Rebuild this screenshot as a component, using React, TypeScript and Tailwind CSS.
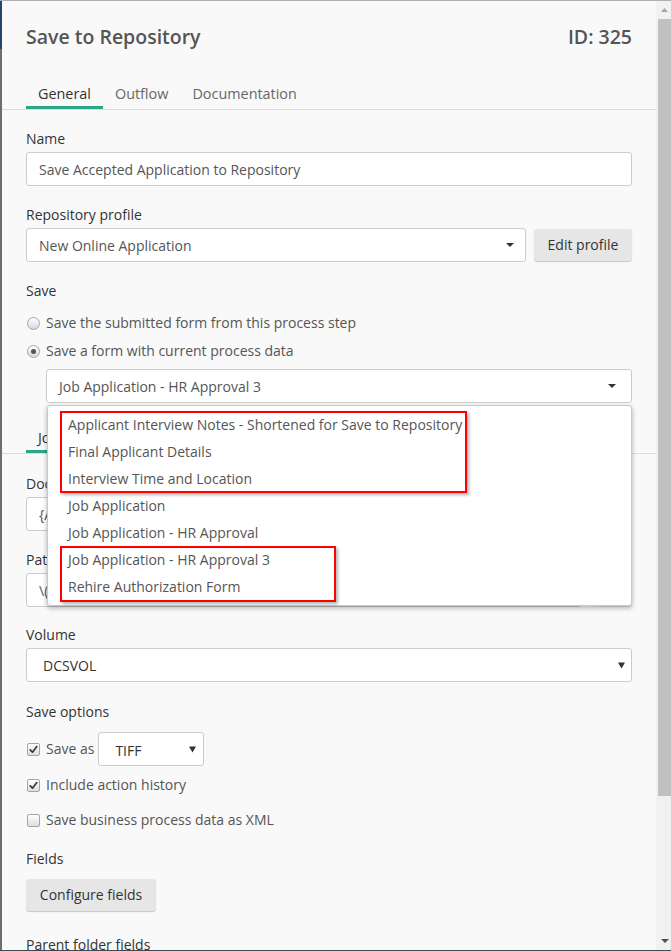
import React from "react";

const font = { fontFamily: '"Open Sans", "Noto Sans", sans-serif' };

function Caret({ className = "" }: { className?: string }) {
  return (
    <svg width="8" height="4" viewBox="0 0 8 4" className={className}>
      <path d="M0 0 L8 0 L4 4 Z" fill="#333" />
    </svg>
  );
}

function NativeCaret() {
  return (
    <svg width="7" height="7" viewBox="0 0 7 7">
      <path d="M0 0.5 L7 0.5 L3.5 6.5 Z" fill="#333" />
    </svg>
  );
}

function Checkbox({ checked }: { checked: boolean }) {
  return (
    <div className="w-[13px] h-[13px] rounded-[2px] border border-[#a5a5a5] bg-gradient-to-b from-[#fefefe] to-[#dedede] flex items-center justify-center shrink-0">
      {checked && (
        <svg width="9" height="9" viewBox="0 0 9 9">
          <path d="M1.2 4.8 L3.5 7.2 L7.8 1.6" stroke="#3a3a3a" strokeWidth="1.7" fill="none" strokeLinecap="round" strokeLinejoin="round" />
        </svg>
      )}
    </div>
  );
}

function Radio({ checked }: { checked: boolean }) {
  return (
    <div className="w-[13px] h-[13px] rounded-full border border-[#a5a5a5] bg-gradient-to-b from-[#fefefe] to-[#d8d8d8] flex items-center justify-center shrink-0">
      {checked && <div className="w-[5px] h-[5px] rounded-full bg-[#555]" />}
    </div>
  );
}

function Label({ children, className = "" }: { children: React.ReactNode; className?: string }) {
  return <div className={`text-[14px] leading-5 text-[#333] ${className}`}>{children}</div>;
}

const items = [
  "Applicant Interview Notes - Shortened for Save to Repository",
  "Final Applicant Details",
  "Interview Time and Location",
  "Job Application",
  "Job Application - HR Approval",
  "Job Application - HR Approval 3",
  "Rehire Authorization Form",
];

export default function App() {
  return (
    <div
      className="w-[671px] h-[951px] overflow-hidden flex bg-[#f9f9f9] border-t border-t-[#b0b0b0] border-b border-b-[#3c4a57]"
      style={font}
    >
      {/* left edge strip */}
      <div className="w-[2px] flex flex-col shrink-0">
        <div className="h-[48px] bg-[#24456a]" />
        <div className="flex-1 bg-[#6e6e6e]" />
      </div>

      {/* main */}
      <div className="flex-1 flex flex-col overflow-hidden">
        <div className="flex justify-between items-center pt-[22px] px-6">
          <div className="text-[19.5px] leading-7 font-semibold text-[#555]">Save to Repository</div>
          <div className="text-[19.5px] leading-7 font-semibold text-[#555]">ID: 325</div>
        </div>

        <div className="mt-[33px] flex px-6 border-b border-[#dddddd]">
          <div className="px-3 text-[14.4px] leading-5 text-[#333] pb-[2px] border-b-[3px] border-[#2ba587]">General</div>
          <div className="px-3 text-[14.4px] leading-5 text-[#666] pb-[2px] border-b-[3px] border-transparent">Outflow</div>
          <div className="px-3 text-[14.4px] leading-5 text-[#666] pb-[2px] border-b-[3px] border-transparent">Documentation</div>
        </div>

        <div className="px-6 pt-[19px] flex flex-col">
          {/* Name */}
          <Label className="mb-[3px]">Name</Label>
          <div className="h-[34px] bg-white border border-[#cccccc] rounded-[3px] flex items-center pl-3 text-[14px] text-[#555]">
            Save Accepted Application to Repository
          </div>

          {/* Repository profile */}
          <Label className="mt-[19px] mb-[3px]">Repository profile</Label>
          <div className="flex gap-2 items-center">
            <div className="flex-1 h-[34px] bg-white border border-[#cccccc] rounded-[3px] flex items-center justify-between pl-3 pr-[11px] text-[14px] text-[#555]">
              <span>New Online Application</span>
              <Caret />
            </div>
            <div className="h-[32px] w-[98px] bg-[#e6e6e6] rounded-[3px] shadow-[0_1px_1px_rgba(0,0,0,0.2)] flex items-center justify-center text-[14px] text-[#333] pb-px">
              Edit profile
            </div>
          </div>

          {/* Save */}
          <Label className="mt-[19px]">Save</Label>
          <div className="mt-[12px] flex items-center gap-[6px] pl-px text-[14px] leading-5 text-[#555]">
            <Radio checked={false} />
            <span>Save the submitted form from this process step</span>
          </div>
          <div className="mt-2 flex items-center gap-[6px] pl-px text-[14px] leading-5 text-[#555]">
            <Radio checked={true} />
            <span>Save a form with current process data</span>
          </div>

          <div className="mt-2 ml-5 relative z-10">
            <div className="h-[34px] bg-white border border-[#cccccc] rounded-[3px] flex items-center justify-between pl-3 pr-[15px] text-[14px] text-[#555]">
              <span>Job Application - HR Approval 3</span>
              <Caret />
            </div>
            {/* dropdown menu */}
            <div className="absolute left-px right-0 top-[36px] bg-white border border-[#c8c8c8] rounded-[3px] shadow-[0_2px_5px_rgba(0,0,0,0.3)] py-[5px]">
              {items.map((it) => (
                <div key={it} className="pl-[20px] text-[14px] leading-[27px] text-[#555] whitespace-nowrap">
                  {it}
                </div>
              ))}
              <div className="absolute left-[12px] top-[5px] w-[407px] h-[82px] border-2 border-[#ff0000] shadow-[2px_2px_3px_rgba(0,0,0,0.3)]" />
              <div className="absolute left-[12px] top-[140px] w-[276px] h-[56px] border-2 border-[#ff0000] shadow-[2px_2px_3px_rgba(0,0,0,0.3)]" />
            </div>
          </div>

          {/* hidden section under dropdown */}
          <div className="mt-[25px] -mx-6 px-6 flex border-b border-[#dddddd]">
            <div className="px-3 text-[14.4px] leading-5 text-[#333] pb-[2px] border-b-[3px] border-[#2ba587]">Job Application</div>
          </div>
          <Label className="mt-[20px] mb-[3px]">Document name</Label>
          <div className="h-[34px] bg-white border border-[#cccccc] rounded-[3px] flex items-center pl-3 text-[14px] text-[#555]">
            {"{Application Name}"}
          </div>
          <Label className="mt-[19px] mb-[3px]">Path</Label>
          <div className="flex gap-4">
            <div className="flex-1 h-[34px] bg-white border border-[#cccccc] rounded-[3px] flex items-center pl-3 text-[14px] text-[#555]">
              {"\\(Applications)"}
            </div>
            <div className="w-[35px] h-[34px] bg-[#e6e6e6] rounded-[3px]" />
          </div>

          {/* Volume */}
          <Label className="mt-[18px] mb-[3px]">Volume</Label>
          <div className="h-[34px] bg-white border border-[#cccccc] rounded-[3px] flex items-center justify-between pl-4 pr-[6px] text-[14px] text-[#333]">
            <span>DCSVOL</span>
            <NativeCaret />
          </div>

          {/* Save options */}
          <Label className="mt-[20px]">Save options</Label>
          <div className="mt-[10px] flex items-center pl-px text-[14px] text-[#555]">
            <Checkbox checked={true} />
            <span className="ml-[6px] leading-5">Save as</span>
            <div className="ml-[4px] w-[106px] h-[34px] bg-white border border-[#cccccc] rounded-[3px] flex items-center justify-between pl-4 pr-[7px] text-[14px] text-[#333]">
              <span className="mt-[3px]">TIFF</span>
              <NativeCaret />
            </div>
          </div>
          <div className="mt-[9px] flex items-center gap-[6px] pl-px text-[14px] leading-5 text-[#555]">
            <Checkbox checked={true} />
            <span>Include action history</span>
          </div>
          <div className="mt-[15px] flex items-center gap-[6px] pl-px text-[14px] leading-5 text-[#555]">
            <Checkbox checked={false} />
            <span>Save business process data as XML</span>
          </div>

          {/* Fields */}
          <Label className="mt-[19px]">Fields</Label>
          <div className="mt-[10px] h-[32px] w-[130px] bg-[#e6e6e6] rounded-[3px] shadow-[0_1px_1px_rgba(0,0,0,0.2)] flex items-center justify-center text-[14px] text-[#333] pb-px">
            Configure fields
          </div>

          <Label className="mt-[24px]">Parent folder fields</Label>
        </div>
      </div>

      {/* scrollbar */}
      <div className="w-[15px] shrink-0 bg-[#f1f1f1] flex flex-col">
        <div className="h-[18px] flex items-center justify-center pl-[2px]">
          <svg width="7" height="4" viewBox="0 0 7 4">
            <path d="M0 4 L7 4 L3.5 0 Z" fill="#a3a3a3" />
          </svg>
        </div>
        <div className="h-[777px] ml-[2px] bg-[#c1c1c1]" />
        <div className="flex-1" />
        <div className="h-[18px] flex items-center justify-center pl-[2px]">
          <svg width="8" height="4" viewBox="0 0 8 4">
            <path d="M0 0 L8 0 L4 4 Z" fill="#505050" />
          </svg>
        </div>
      </div>
    </div>
  );
}
